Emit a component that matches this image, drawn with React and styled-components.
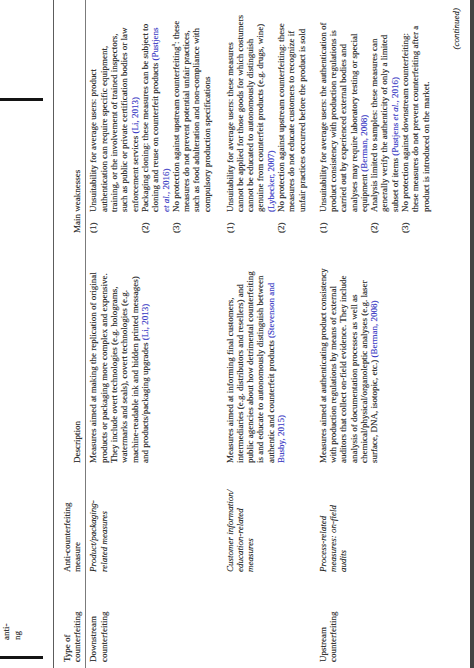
import styled, { createGlobalStyle } from "styled-components";

const GlobalStyle = createGlobalStyle`
  html, body {
    margin: 0;
    padding: 0;
    background: #fff;
  }
  body {
    overflow: hidden;
  }
`;

const Viewport = styled.div`
  width: 474px;
  height: 668px;
  overflow: hidden;
  background: #fff;
`;

// the printed page is landscape, turned a quarter to the left
const Sheet = styled.div`
  width: 668px;
  height: 474px;
  display: flex;
  flex-direction: column;
  transform-origin: 0 0;
  transform: translateY(668px) rotate(-90deg);
  font-family: "Liberation Serif", "Times New Roman", serif;
  font-size: 9px;
  line-height: 10.3px;
  color: #242424;
  -webkit-text-stroke: 0.12px #242424;
  white-space: nowrap;
  overflow: hidden;
`;

const SideMargin = styled.div`
  height: 53px;
  flex-shrink: 0;
  display: flex;
  align-items: flex-start;
  border-bottom: 1px solid #5c5c5c;
`;

const Rule = styled.div`
  flex: 0 0 3px;
  height: 43px;
  margin-left: ${(p) => p.$offset}px;
  background: #141414;
`;

const Caption = styled.div`
  flex: 0 0 536px;
  margin-left: 16px;
  padding-top: 0.5px;
  line-height: 11px;
`;

const Columns = styled.div`
  display: grid;
  grid-template-columns: 96px 109px 230px 1fr;
`;

const HeadRow = styled(Columns)`
  align-items: end;
  padding: 7.5px 0 3.4px;
  border-bottom: 1.5px solid #7b7b7b;
`;

const BodyRow = styled(Columns)`
  align-items: start;
  padding-top: ${(p) => p.$gap}px;
`;

const Cell = styled.div`
  padding-left: ${(p) => (p.$first ? 6 : 0)}px;
  font-style: ${(p) => (p.$italic ? "italic" : "normal")};
`;

const Items = styled.div`
  display: flex;
  flex-direction: column;
`;

const Item = styled.div`
  display: grid;
  grid-template-columns: 21px 1fr;
`;

const Cite = styled.span`
  color: #3838c4;
  -webkit-text-stroke: 0.12px #3838c4;
`;

const Mark = styled.sup`
  font-size: 6px;
  line-height: 0;
`;

const Continued = styled.div`
  margin-top: 20.5px;
  padding-right: 8px;
  text-align: right;
  font-style: italic;
`;

const EdgeBar = styled.div`
  margin-top: auto;
  height: 4px;
  background: #444;
`;

function Weakness({ n, children }) {
  return (
    <Item>
      <span>({n})</span>
      <span>{children}</span>
    </Item>
  );
}

export default function App() {
  return (
    <Viewport>
      <GlobalStyle />
      <Sheet>
        <SideMargin>
          <Rule $offset={9} />
          <Caption>
            anti-
            <br />
            ng
          </Caption>
          <Rule $offset={3} />
        </SideMargin>

        <HeadRow>
          <Cell $first>
            Type of
            <br />
            counterfeiting
          </Cell>
          <Cell>
            Anti-counterfeiting
            <br />
            measure
          </Cell>
          <Cell>Description</Cell>
          <Cell>Main weaknesses</Cell>
        </HeadRow>

        <BodyRow $gap={2}>
          <Cell $first>
            Downstream
            <br />
            counterfeiting
          </Cell>
          <Cell $italic>
            Product/packaging-
            <br />
            related measures
          </Cell>
          <Cell>
            Measures aimed at making the replication of original
            <br />
            products or packaging more complex and expensive.
            <br />
            They include overt technologies (e.g. holograms,
            <br />
            watermarks and seals), covert technologies (e.g.
            <br />
            machine-readable ink and hidden printed messages)
            <br />
            and products/packaging upgrades <Cite>(Li, 2013)</Cite>
          </Cell>
          <Items>
            <Weakness n={1}>
              Unsuitability for average users: product
              <br />
              authentication can require specific equipment,
              <br />
              training, or the involvement of trained inspectors,
              <br />
              such as public or private certification bodies or law
              <br />
              enforcement services <Cite>(Li, 2013)</Cite>
            </Weakness>
            <Weakness n={2}>
              Packaging cloning: these measures can be subject to
              <br />
              cloning and reuse on counterfeit products <Cite>(Pustjens</Cite>
              <br />
              <Cite>
                <i>et al.</i>, 2016)
              </Cite>
            </Weakness>
            <Weakness n={3}>
              No protection against upstream counterfeiting<Mark>a</Mark>: these
              <br />
              measures do not prevent potential unfair practices,
              <br />
              such as food adulteration and non-compliance with
              <br />
              compulsory production specifications
            </Weakness>
          </Items>
        </BodyRow>

        <BodyRow $gap={12.5}>
          <Cell $first />
          <Cell $italic>
            Customer information/
            <br />
            education-related
            <br />
            measures
          </Cell>
          <Cell>
            Measures aimed at informing final customers,
            <br />
            intermediaries (e.g. distributors and resellers) and
            <br />
            public agencies about how detrimental counterfeiting
            <br />
            is and educate to autonomously distinguish between
            <br />
            authentic and counterfeit products <Cite>(Stevenson and</Cite>
            <br />
            <Cite>Busby, 2015)</Cite>
          </Cell>
          <Items>
            <Weakness n={1}>
              Unsuitability for average users: these measures
              <br />
              cannot be applied for those goods for which costumers
              <br />
              cannot be educated to autonomously distinguish
              <br />
              genuine from counterfeit products (e.g. drugs, wine)
              <br />
              <Cite>(Lybecker, 2007)</Cite>
            </Weakness>
            <Weakness n={2}>
              No protection against upstream counterfeiting: these
              <br />
              measures do not educate customers to recognize if
              <br />
              unfair practices occurred before the product is sold
            </Weakness>
          </Items>
        </BodyRow>

        <BodyRow $gap={10.7}>
          <Cell $first>
            Upstream
            <br />
            counterfeiting
          </Cell>
          <Cell $italic>
            Process-related
            <br />
            measures: on-field
            <br />
            audits
          </Cell>
          <Cell>
            Measures aimed at authenticating product consistency
            <br />
            with production regulations by means of external
            <br />
            auditors that collect on-field evidence. They include
            <br />
            analysis of documentation processes as well as
            <br />
            chemical/physical/organoleptic analyses (e.g. laser
            <br />
            surface, DNA, isotopic, etc.) <Cite>(Berman, 2008)</Cite>
          </Cell>
          <Items>
            <Weakness n={1}>
              Unsuitability for average users: the authentication of
              <br />
              product consistency with production regulations is
              <br />
              carried out by experienced external bodies and
              <br />
              analyses may require laboratory testing or special
              <br />
              equipment <Cite>(Berman, 2008)</Cite>
            </Weakness>
            <Weakness n={2}>
              Analysis limited to samples: these measures can
              <br />
              generally verify the authenticity of only a limited
              <br />
              subset of items{" "}
              <Cite>
                (Pustjens <i>et al.</i>, 2016)
              </Cite>
            </Weakness>
            <Weakness n={3}>
              No protection against downstream counterfeiting:
              <br />
              these measures do not prevent counterfeiting after a
              <br />
              product is introduced on the market.
            </Weakness>
          </Items>
        </BodyRow>

        <Continued>(continued)</Continued>
        <EdgeBar />
      </Sheet>
    </Viewport>
  );
}
